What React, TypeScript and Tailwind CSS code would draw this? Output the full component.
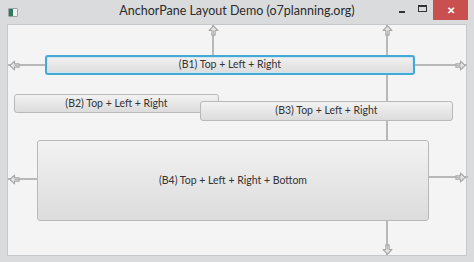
import React from "react";

function Arrow({ dir, className }: { dir: "up" | "down" | "left" | "right"; className: string }) {
  const rot = { up: 0, right: 90, down: 180, left: 270 }[dir];
  return (
    <svg
      width="11"
      height="11"
      viewBox="0 0 10 10"
      className={"absolute " + className}
      style={{ transform: `rotate(${rot}deg)` }}
    >
      <path
        d="M5 0.8 L9 5 L6.5 5 L6.5 9.2 L3.5 9.2 L3.5 5 L1 5 Z"
        fill="#e4e4e4"
        stroke="#a6a6a6"
        strokeWidth="1"
        strokeLinejoin="round"
      />
      <path d="M5 5 L5 9.2" stroke="#b8b8b8" strokeWidth="1" />
    </svg>
  );
}

function Btn({ label, className, focused }: { label: string; className: string; focused?: boolean }) {
  return (
    <div
      className={
        "absolute flex items-center justify-center rounded-[3px] bg-gradient-to-b from-[#f2f2f2] to-[#dcdcdc] text-[10.5px] text-[#333] " +
        (focused
          ? "border-[2px] border-[#45a9d6] shadow-[inset_0_0_0_1px_#cfe6f2] "
          : "border border-[#b9b9b9] ") +
        className
      }
      style={{ fontFamily: 'Lato, "Open Sans", sans-serif' }}
    >
      {label}
    </div>
  );
}

export default function App() {
  return (
    <div
      className="flex h-[262px] w-[474px] flex-col bg-[#d9dbdd]"
      style={{ fontFamily: 'Lato, "Open Sans", sans-serif' }}
    >
      {/* title bar */}
      <div className="grid h-[24px] grid-cols-[1fr_auto_1fr]">
        <div className="flex items-center pl-[8px]">
          <div className="flex h-[9px] w-[10px] overflow-hidden rounded-[1px] border border-[#9aa3a8] bg-[#eef0f1]">
            <div className="h-full w-[4px] bg-[#2f7a5a]" />
          </div>
        </div>
        <div className="flex items-center pb-[2px] text-[12.5px] text-[#2b2b2b]">
          AnchorPane Layout Demo (o7planning.org)
        </div>
        <div className="flex items-start justify-end pr-[6px]">
          <div className="mt-[11px] mr-[13px] h-[2px] w-[6px] bg-[#333]" />
          <div className="mt-[5px] mr-[6px] h-[7px] w-[9px] border border-t-2 border-[#333]" />
          <div className="flex h-[20px] w-[35px] items-center justify-center bg-[#c9504e] text-[10px] font-bold text-white">
            ✕
          </div>
        </div>
      </div>
      {/* content */}
      <div className="flex flex-1 px-[7px] pb-[6px]">
        <div className="relative flex-1 border border-[#c6c9cb] bg-[#f4f4f4]">
          {/* anchor lines */}
          <div className="absolute left-[204px] top-0 h-[31px] w-[2px] bg-[#b8b8b8]" />
          <div className="absolute left-[378px] top-0 h-full w-[2px] bg-[#b8b8b8]" />
          <div className="absolute left-0 top-[39px] h-[2px] w-[38px] bg-[#b8b8b8]" />
          <div className="absolute left-[407px] top-[39px] h-[2px] w-[52px] bg-[#b8b8b8]" />
          <div className="absolute left-0 top-[153px] h-[2px] w-[30px] bg-[#b8b8b8]" />
          <div className="absolute left-[420px] top-[151px] h-[2px] w-[40px] bg-[#b8b8b8]" />
          {/* arrowheads */}
          <Arrow dir="up" className="left-[199.5px] top-[0px]" />
          <Arrow dir="up" className="left-[373.5px] top-[0px]" />
          <Arrow dir="down" className="left-[373.5px] top-[219px]" />
          <Arrow dir="left" className="left-[1px] top-[34.5px]" />
          <Arrow dir="right" className="left-[447px] top-[34.5px]" />
          <Arrow dir="left" className="left-[1px] top-[148.5px]" />
          <Arrow dir="right" className="left-[447px] top-[146.5px]" />
          {/* buttons */}
          <Btn label="(B1) Top + Left + Right" focused className="left-[37px] top-[30px] h-[20px] w-[370px]" />
          <Btn label="(B2) Top + Left + Right" className="left-[6px] top-[69px] h-[19px] w-[205px]" />
          <Btn label="(B3) Top + Left + Right" className="left-[192px] top-[76px] h-[20px] w-[253px]" />
          <Btn label="(B4) Top + Left + Right + Bottom" className="left-[29px] top-[115px] h-[81px] w-[392px]" />
        </div>
      </div>
    </div>
  );
}
